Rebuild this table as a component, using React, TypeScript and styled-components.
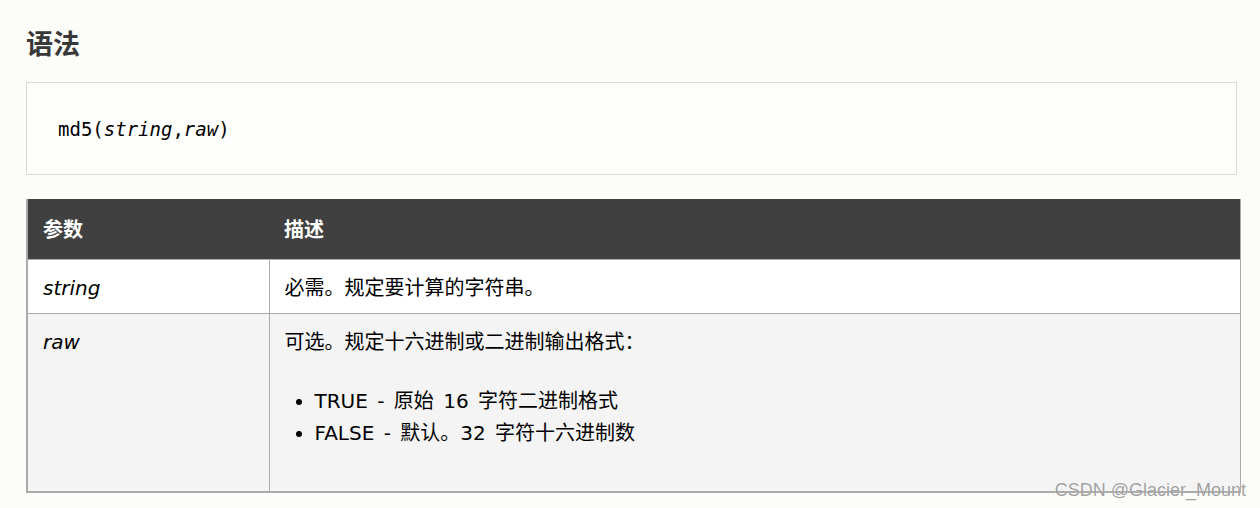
import React from "react";
import styled, { createGlobalStyle } from "styled-components";

const Global = createGlobalStyle`
  html, body { margin: 0; padding: 0; background: #fcfcf9; }
  body { font-family: "DejaVu Sans", "Noto Sans CJK SC", sans-serif; color: #000; }
`;

const Page = styled.div`
  position: relative;
  padding: 0 19px 0 26px;
  height: 508px;
  box-sizing: border-box;
  overflow: hidden;
`;

const Heading = styled.h2`
  margin: 25px 0 0;
  font-family: "Noto Sans CJK SC", sans-serif;
  font-size: 27px;
  line-height: 36px;
  font-weight: 700;
  color: #383838;
`;

const CodeBox = styled.div`
  margin: 21px 4px 0 0;
  padding: 32px 31px 31px;
  background: #fefefc;
  border: 1px solid #d9d9d9;
  font-family: "DejaVu Sans Mono", monospace;
  font-size: 19px;
  line-height: 28px;
  color: #000;
`;

const Table = styled.table`
  margin-top: 24px;
  width: 100%;
  border-collapse: collapse;
  table-layout: fixed;
  border-left: 2px solid #aaa;
  border-bottom: 2px solid #aaa;
  border-right: 1px solid #aaa;
`;

const Th = styled.th<{ $w?: number }>`
  ${(p) => (p.$w ? `width: ${p.$w}px;` : "")}
  background: #404040;
  color: #fff;
  text-align: left;
  font-family: "Noto Sans CJK SC", sans-serif;
  font-size: 20px;
  font-weight: 700;
  line-height: 32px;
  padding: 14px 15px;
  border: none;
`;

const Tr = styled.tr<{ $alt?: boolean }>`
  background: ${(p) => (p.$alt ? "#f4f4f4" : "#ffffff")};
`;

const Td = styled.td`
  vertical-align: top;
  border: 1px solid #aaa;
  padding: 12px 15px 9px;
  font-size: 20px;
  line-height: 32px;
`;

const ParamName = styled.em`
  font-style: italic;
`;

const Para = styled.p`
  margin: 0 0 27px;
`;

const List = styled.ul`
  margin: 0 0 33px;
  padding-left: 30px;
  list-style: disc;
  word-spacing: 3px;
`;

const Watermark = styled.div`
  position: absolute;
  right: 14px;
  top: 478px;
  font-family: "Liberation Sans", Arial, sans-serif;
  font-size: 18px;
  line-height: 24px;
  color: rgba(120, 120, 120, 0.7);
  text-shadow: 0 0 1px rgba(255, 255, 255, 0.9);
  white-space: nowrap;
`;

export default function App() {
  return (
    <>
      <Global />
      <Page>
        <Heading>语法</Heading>
        <CodeBox>
          md5(<i>string</i>,<i>raw</i>)
        </CodeBox>
        <Table>
          <thead>
            <tr>
              <Th $w={211}>参数</Th>
              <Th>描述</Th>
            </tr>
          </thead>
          <tbody>
            <Tr>
              <Td>
                <ParamName>string</ParamName>
              </Td>
              <Td>必需。规定要计算的字符串。</Td>
            </Tr>
            <Tr $alt>
              <Td>
                <ParamName>raw</ParamName>
              </Td>
              <Td>
                <Para>可选。规定十六进制或二进制输出格式：</Para>
                <List>
                  <li>TRUE - 原始 16 字符二进制格式</li>
                  <li>FALSE - 默认。32 字符十六进制数</li>
                </List>
              </Td>
            </Tr>
          </tbody>
        </Table>
        <Watermark>CSDN @Glacier_Mount</Watermark>
      </Page>
    </>
  );
}
